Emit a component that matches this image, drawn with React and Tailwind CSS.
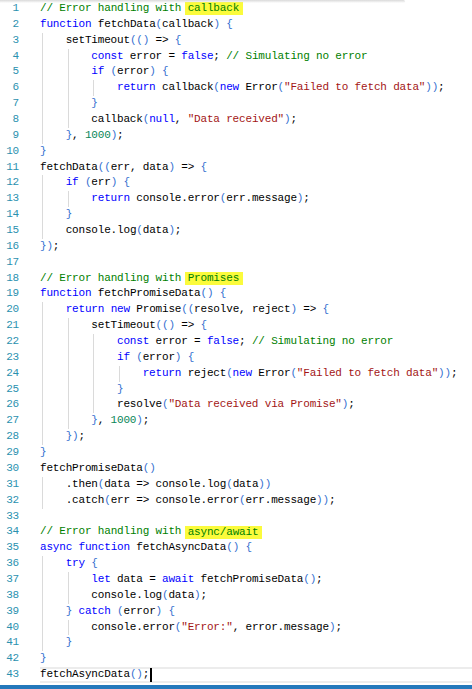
import React from 'react';

const code = [
  { t: '// Error handling with ', hl: 'callback' },
  'function fetchData(callback) {',
  '    setTimeout(() => {',
  '        const error = false; // Simulating no error',
  '        if (error) {',
  '            return callback(new Error("Failed to fetch data"));',
  '        }',
  '        callback(null, "Data received");',
  '    }, 1000);',
  '}',
  'fetchData((err, data) => {',
  '    if (err) {',
  '        return console.error(err.message);',
  '    }',
  '    console.log(data);',
  '});',
  '',
  { t: '// Error handling with ', hl: 'Promises' },
  'function fetchPromiseData() {',
  '    return new Promise((resolve, reject) => {',
  '        setTimeout(() => {',
  '            const error = false; // Simulating no error',
  '            if (error) {',
  '                return reject(new Error("Failed to fetch data"));',
  '            }',
  '            resolve("Data received via Promise");',
  '        }, 1000);',
  '    });',
  '}',
  'fetchPromiseData()',
  '    .then(data => console.log(data))',
  '    .catch(err => console.error(err.message));',
  '',
  { t: '// Error handling with ', hl: 'async/await' },
  'async function fetchAsyncData() {',
  '    try {',
  '        let data = await fetchPromiseData();',
  '        console.log(data);',
  '    } catch (error) {',
  '        console.error("Error:", error.message);',
  '    }',
  '}',
  'fetchAsyncData();',
];

const TOKEN_RE =
  /(\/\/.*$)|("[^"]*")|(\b\d+\b)|((?<!\.)\b(?:function|const|let|return|new|if|async|await|try|catch|false|null)\b)|([(){}])/g;

// split a line into coloured pieces
const tokenize = (text) => {
  const out = [];
  let last = 0;
  let m;
  TOKEN_RE.lastIndex = 0;
  while ((m = TOKEN_RE.exec(text)) !== null) {
    if (m.index > last) out.push({ cls: 'text-black', s: text.slice(last, m.index) });
    let cls = 'text-black';
    if (m[1]) cls = 'text-[#008000]';
    else if (m[2]) cls = 'text-[#a31515]';
    else if (m[3]) cls = 'text-[#098658]';
    else if (m[4]) cls = 'text-[#0000ff]';
    else if (m[5]) cls = 'text-[#3570d0]';
    out.push({ cls, s: m[0] });
    last = m.index + m[0].length;
  }
  if (last < text.length) out.push({ cls: 'text-black', s: text.slice(last) });
  return out;
};

const CodeLine = ({ n, line, active }) => {
  const raw = typeof line === 'string' ? line : line.t;
  const indent = Math.floor((raw.length - raw.trimStart().length) / 4);
  const body = raw.trimStart();

  return (
    <div className="flex h-[15.86px] leading-[15.86px]">
      <span className="w-[19px] shrink-0 text-right text-[#2b91af]">{n}</span>
      <div
        className={`ml-[21px] flex flex-1 items-stretch ${
          active ? 'box-border border-y-2 border-[#ececec]' : ''
        }`}
      >
        {Array.from({ length: indent }).map((_, i) => (
          <span key={i} className="ml-[2px] w-[23.68px] shrink-0 border-l border-[#dadada]" />
        ))}
        <span className="whitespace-pre flex items-center">
          {typeof line === 'string' ? (
            tokenize(body).map((tk, i) => (
              <span key={i} className={tk.cls}>
                {tk.s}
              </span>
            ))
          ) : (
            <>
              <span className="text-[#008000]">{line.t}</span>
              <span className="-ml-[3px] pl-[3px] pr-[4px] bg-[#fbfb3c] text-[#008000] leading-[13px]">
                {line.hl}
              </span>
            </>
          )}
          {active && <span className="ml-[1px] inline-block w-[1.5px] h-[14px] bg-black" />}
        </span>
      </div>
    </div>
  );
};

export default function App() {
  return (
    <div className="relative w-[472px] h-[689px] overflow-hidden bg-white flex flex-col font-['Liberation_Mono',monospace] text-[11px] tracking-[-0.18px]">
      {/* scroll shadow */}
      <div className="absolute top-0 left-0 w-[405px] h-[3px] bg-gradient-to-b from-[#d9d9d9] to-transparent rounded-r-full" />

      <div className="flex-1 pt-[1px]">
        {code.map((line, i) => (
          <CodeLine key={i} n={i + 1} line={line} active={i === code.length - 1} />
        ))}
      </div>

      <div className="h-[4px] bg-[#2478bb]" />
    </div>
  );
}
